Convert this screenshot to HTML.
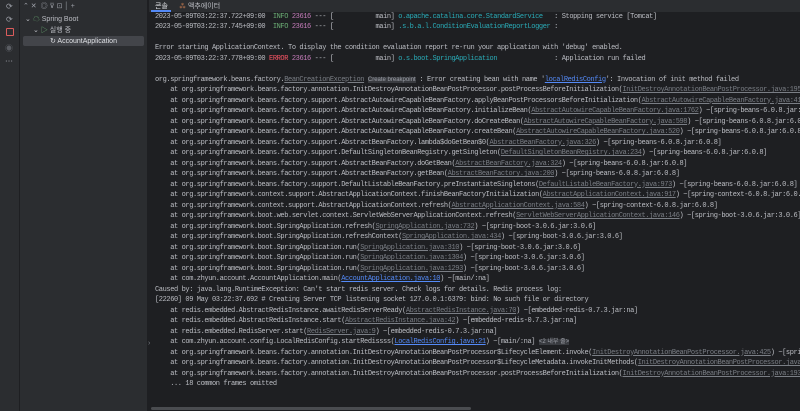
<!DOCTYPE html>
<html><head><meta charset="utf-8"><style>
*{margin:0;padding:0;box-sizing:border-box}
body{width:800px;height:411px;overflow:hidden;background:#1e1f22;font-family:"Liberation Sans","Noto Sans CJK KR",sans-serif;color:#bcbec4;position:relative}
#tb{position:absolute;left:0;top:0;width:20px;height:411px;background:#2b2d30;border-right:1px solid #1e1f22}
#tree{position:absolute;left:20px;top:0;width:128px;height:411px;background:#2b2d30;border-right:1px solid #1e1f22}
#tabs{position:absolute;left:149px;top:0;width:651px;height:12px;background:#2b2d30;font-size:7px}
#conw{position:absolute;left:155px;top:0;width:645px;height:411px;overflow:hidden}
#con{position:absolute;left:0;top:11.5px;font-family:"Liberation Mono",monospace;font-size:7px;letter-spacing:-0.4px;line-height:10.5px;white-space:pre;tab-size:4;-moz-tab-size:4;color:#bcbec4}
.l{color:#7a7e85;text-decoration:underline}
.b{color:#548af7;text-decoration:underline}
.g{color:#6aab73}.p{color:#c77dbb}.t{color:#2aacb8}.r{color:#f75464}
.ic{position:absolute;font-size:8px;color:#9da0a8}
</style></head><body>
<div id="tb">
<div class="ic" style="left:6px;top:2px">⟳</div>
<div class="ic" style="left:6px;top:15px">⟳</div>
<div style="position:absolute;left:6px;top:28px;width:8px;height:8px;border:1.3px solid #db5c5c;border-radius:1px"></div>
<div class="ic" style="left:5px;top:43px;color:#5a5d63">◉</div>
<div class="ic" style="left:5px;top:56px">⋯</div>
</div>
<div id="tree">
<div class="ic" style="left:3px;top:1px;font-size:7px">⌃ ✕ &nbsp;◎ ⊽ ⊡ │ +</div>
<div class="ic" style="left:5px;top:14px;font-size:7px;color:#bcbec4">⌄ <span style="color:#6aab73">☁</span> Spring Boot</div>
<div class="ic" style="left:13px;top:25px;font-size:7px;color:#bcbec4">⌄ <span style="color:#6aab73">▷</span> 실행 중</div>
<div style="position:absolute;left:3px;top:36px;width:121px;height:10px;background:#43454a;border-radius:2px"></div>
<div class="ic" style="left:30px;top:37px;font-size:7px;color:#dfe1e5">↻ AccountApplication</div>
</div>
<div id="tabs"><span style="position:absolute;left:6px;top:1px;color:#dfe1e5">콘솔</span><div style="position:absolute;left:2px;top:10px;width:20px;height:2px;background:#548af7"></div><span style="position:absolute;left:30px;top:1px"><span style="color:#e08855">⁂</span> 액추에이터</span></div>
<div id="conw"><div id="con">2023-05-09T03:22:37.722+09:00  <span class="g">INFO</span> <span class="p">23616</span> --- [           main] <span class="t">o.apache.catalina.core.StandardService  </span> : Stopping service [Tomcat]
2023-05-09T03:22:37.745+09:00  <span class="g">INFO</span> <span class="p">23616</span> --- [           main] <span class="t">.s.b.a.l.ConditionEvaluationReportLogger</span> :

Error starting ApplicationContext. To display the condition evaluation report re-run your application with 'debug' enabled.
2023-05-09T03:22:37.778+09:00 <span class="r">ERROR</span> <span class="p">23616</span> --- [           main] <span class="t">o.s.boot.SpringApplication              </span> : Application run failed

org.springframework.beans.factory.<span class="l">BeanCreationException</span> <span style="background:#393b40;color:#9da0a8;font-family:'Liberation Sans';font-size:6px;letter-spacing:0">Create breakpoint</span> : Error creating bean with name '<span class="b">localRedisConfig</span>': Invocation of init method failed
    at org.springframework.beans.factory.annotation.InitDestroyAnnotationBeanPostProcessor.postProcessBeforeInitialization(<span class="l">InitDestroyAnnotationBeanPostProcessor.java:195</span>)
    at org.springframework.beans.factory.support.AbstractAutowireCapableBeanFactory.applyBeanPostProcessorsBeforeInitialization(<span class="l">AbstractAutowireCapableBeanFactory.java:410</span>)
    at org.springframework.beans.factory.support.AbstractAutowireCapableBeanFactory.initializeBean(<span class="l">AbstractAutowireCapableBeanFactory.java:1762</span>) ~[spring-beans-6.0.8.jar:6.0.8]
    at org.springframework.beans.factory.support.AbstractAutowireCapableBeanFactory.doCreateBean(<span class="l">AbstractAutowireCapableBeanFactory.java:598</span>) ~[spring-beans-6.0.8.jar:6.0.8]
    at org.springframework.beans.factory.support.AbstractAutowireCapableBeanFactory.createBean(<span class="l">AbstractAutowireCapableBeanFactory.java:520</span>) ~[spring-beans-6.0.8.jar:6.0.8]
    at org.springframework.beans.factory.support.AbstractBeanFactory.lambda$doGetBean$0(<span class="l">AbstractBeanFactory.java:326</span>) ~[spring-beans-6.0.8.jar:6.0.8]
    at org.springframework.beans.factory.support.DefaultSingletonBeanRegistry.getSingleton(<span class="l">DefaultSingletonBeanRegistry.java:234</span>) ~[spring-beans-6.0.8.jar:6.0.8]
    at org.springframework.beans.factory.support.AbstractBeanFactory.doGetBean(<span class="l">AbstractBeanFactory.java:324</span>) ~[spring-beans-6.0.8.jar:6.0.8]
    at org.springframework.beans.factory.support.AbstractBeanFactory.getBean(<span class="l">AbstractBeanFactory.java:200</span>) ~[spring-beans-6.0.8.jar:6.0.8]
    at org.springframework.beans.factory.support.DefaultListableBeanFactory.preInstantiateSingletons(<span class="l">DefaultListableBeanFactory.java:973</span>) ~[spring-beans-6.0.8.jar:6.0.8]
    at org.springframework.context.support.AbstractApplicationContext.finishBeanFactoryInitialization(<span class="l">AbstractApplicationContext.java:917</span>) ~[spring-context-6.0.8.jar:6.0.8]
    at org.springframework.context.support.AbstractApplicationContext.refresh(<span class="l">AbstractApplicationContext.java:584</span>) ~[spring-context-6.0.8.jar:6.0.8]
    at org.springframework.boot.web.servlet.context.ServletWebServerApplicationContext.refresh(<span class="l">ServletWebServerApplicationContext.java:146</span>) ~[spring-boot-3.0.6.jar:3.0.6]
    at org.springframework.boot.SpringApplication.refresh(<span class="l">SpringApplication.java:732</span>) ~[spring-boot-3.0.6.jar:3.0.6]
    at org.springframework.boot.SpringApplication.refreshContext(<span class="l">SpringApplication.java:434</span>) ~[spring-boot-3.0.6.jar:3.0.6]
    at org.springframework.boot.SpringApplication.run(<span class="l">SpringApplication.java:310</span>) ~[spring-boot-3.0.6.jar:3.0.6]
    at org.springframework.boot.SpringApplication.run(<span class="l">SpringApplication.java:1304</span>) ~[spring-boot-3.0.6.jar:3.0.6]
    at org.springframework.boot.SpringApplication.run(<span class="l">SpringApplication.java:1293</span>) ~[spring-boot-3.0.6.jar:3.0.6]
    at com.zhyun.account.AccountApplication.main(<span class="b">AccountApplication.java:10</span>) ~[main/:na]
Caused by: java.lang.RuntimeException: Can't start redis server. Check logs for details. Redis process log:
[22260] 09 May 03:22:37.692 # Creating Server TCP listening socket 127.0.0.1:6379: bind: No such file or directory
    at redis.embedded.AbstractRedisInstance.awaitRedisServerReady(<span class="l">AbstractRedisInstance.java:70</span>) ~[embedded-redis-0.7.3.jar:na]
    at redis.embedded.AbstractRedisInstance.start(<span class="l">AbstractRedisInstance.java:42</span>) ~[embedded-redis-0.7.3.jar:na]
    at redis.embedded.RedisServer.start(<span class="l">RedisServer.java:9</span>) ~[embedded-redis-0.7.3.jar:na]
    at com.zhyun.account.config.LocalRedisConfig.startRedissss(<span class="b">LocalRedisConfig.java:21</span>) ~[main/:na] <span style="background:#393b40;color:#9da0a8;font-family:'Liberation Sans','Noto Sans CJK KR';font-size:6px;letter-spacing:0">&lt;2 내부 줄&gt;</span>
    at org.springframework.beans.factory.annotation.InitDestroyAnnotationBeanPostProcessor$LifecycleElement.invoke(<span class="l">InitDestroyAnnotationBeanPostProcessor.java:425</span>) ~[spring-beans-6.0.8.jar]
    at org.springframework.beans.factory.annotation.InitDestroyAnnotationBeanPostProcessor$LifecycleMetadata.invokeInitMethods(<span class="l">InitDestroyAnnotationBeanPostProcessor.java:369</span>)
    at org.springframework.beans.factory.annotation.InitDestroyAnnotationBeanPostProcessor.postProcessBeforeInitialization(<span class="l">InitDestroyAnnotationBeanPostProcessor.java:193</span>)
    ... 18 common frames omitted</div></div>
<div style="position:absolute;left:147px;top:0;width:2px;height:411px;background:#1e1f22"></div>
<div style="position:absolute;left:151px;top:407px;width:320px;height:3px;background:#4a4c50;border-radius:2px"></div>
<div style="position:absolute;left:148px;top:340px;font-size:7px;color:#7a7e85">›</div>
</body></html>
